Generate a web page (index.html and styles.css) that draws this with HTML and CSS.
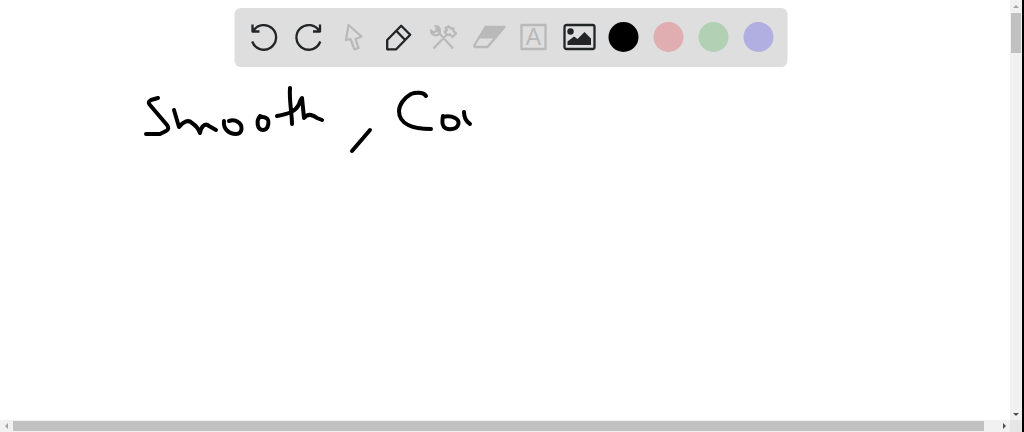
FILE: index.html
```html
<!DOCTYPE html>
<html lang="en">
<head>
    <meta charset="UTF-8">
    <meta name="viewport" content="width=device-width, initial-scale=1.0">
    <title>Whiteboard</title>
    <link rel="stylesheet" href="styles.css">
</head>
<body>
    <div class="app">
        <!-- Toolbar -->
        <div class="toolbar" role="toolbar" aria-label="Drawing tools">
            <button class="tool" type="button" aria-label="Undo">
                <svg viewBox="0 0 30 30"><path d="M4 2.500V9.500H11M4.600 9.300A12.300 12.300 0 1 1 3.700 19.500"/></svg>
            </button>
            <button class="tool" type="button" aria-label="Redo">
                <svg viewBox="0 0 30 30"><path d="M26.500 2.500V9.500H19.500M25.900 9.300A12.300 12.300 0 1 0 26.800 19.500"/></svg>
            </button>
            <button class="tool muted" type="button" aria-label="Select">
                <svg viewBox="0 0 30 30"><path d="M10 3L7.500 18L12 17L16 27.300L20 26L17 17L23 14.500Z"/></svg>
            </button>
            <button class="tool" type="button" aria-label="Pen">
                <svg viewBox="0 0 30 30"><path d="M3.700 27.300V18L17.700 3.700L26.700 12.700L12.700 27.300ZM12.700 8.700L21.700 18"/></svg>
            </button>
            <button class="tool muted" type="button" aria-label="Tools">
                <svg viewBox="0 0 30 30">
                    <path d="M6 4.500C9 3.500 12 6 11.500 9L11 11.500L24.500 26.500M11 11.500C8 15 2.500 13 2.500 8.500L5 10.500L8 9L8 6ZM5 26.500L18.500 12.500"/>
                    <path d="M17 6L20 4.500L22.500 6.500L25 6.500L25 9L27.500 11.500L24 15L21.500 12.500L19 13L16 10L18.500 8Z"/>
                </svg>
            </button>
            <button class="tool muted" type="button" aria-label="Eraser">
                <svg viewBox="0 0 30 30">
                    <path class="solid" d="M12 4H32L21 16.500H4Z"/>
                    <path d="M12 5H31L14 25H1L1 23L12 5Z"/>
                </svg>
            </button>
            <button class="tool muted" type="button" aria-label="Text">
                <svg viewBox="0 0 30 30">
                    <rect x="3" y="3" width="24" height="24"/>
                    <text class="letter" x="15" y="23" text-anchor="middle">A</text>
                </svg>
            </button>
            <button class="tool" type="button" aria-label="Image">
                <svg viewBox="0 0 30 30">
                    <rect x="1" y="3" width="30" height="24" rx="2"/>
                    <circle class="solid" cx="7" cy="9.500" r="3.200"/>
                    <path class="solid" d="M4 23V19.500L10.500 14.500L14 17L21 10L27.500 16.500V23Z"/>
                </svg>
            </button>
            <button class="swatch black" type="button" aria-label="Black"></button>
            <button class="swatch red" type="button" aria-label="Red"></button>
            <button class="swatch green" type="button" aria-label="Green"></button>
            <button class="swatch blue" type="button" aria-label="Blue"></button>
        </div>

        <!-- Drawing area -->
        <main class="board">
            <svg class="ink" role="img" aria-label="Handwriting">
                <path d="M158 98L151 100Q147 102 150 105L167 125Q170 129 166 131L160 134H146"/>
                <path d="M174 110L179 127C183 122 188 119 192 123Q198 127 200 133C201 127 205 122 209 126L216 130"/>
                <path d="M224 121C223 129 229 134 236 134C243 134 243 125 238 122C235 120 232 120 229 121"/>
                <path d="M260 116C256 121 257 130 263 130C269 130 270 119 266 118C264 116 262 118 260 116"/>
                <path d="M290 88C289 101 292 113 292 124M277 116C287 114 296 112 299 104C300 101 301 99 302 98L304 118C308 113 313 115 317 118L322 120"/>
                <path d="M370 130L352 151"/>
                <path d="M426 96C424 92 416 92 411 94C404 98 399 105 399 111C399 124 413 129 431 129"/>
                <path d="M443 116C441 126 444 130 452 129C459 128 461 121 455 118C451 116 447 116 443 117"/>
                <path d="M464 112C464 118 467 122 470 124"/>
            </svg>
        </main>

        <!-- Scrollbars -->
        <div class="scrollbar vertical">
            <button class="arrow up" type="button" aria-label="Scroll up"></button>
            <div class="track"><div class="thumb"></div></div>
            <button class="arrow down dark" type="button" aria-label="Scroll down"></button>
        </div>
        <div class="scrollbar horizontal">
            <button class="arrow left" type="button" aria-label="Scroll left"></button>
            <div class="track"><div class="thumb"></div></div>
            <button class="arrow right dark" type="button" aria-label="Scroll right"></button>
        </div>
        <div class="corner"></div>
    </div>
</body>
</html>
```
FILE: styles.css
```css
/* General styles */
* {
    box-sizing: border-box;
}

body {
    margin: 0;
    background-color: #fff;
    font-family: "Liberation Sans", Arial, sans-serif;
}

button {
    padding: 0;
    border: none;
    background: none;
    cursor: pointer;
}

.app {
    position: relative;
    display: grid;
    grid-template-columns: 1fr 12px;
    grid-template-rows: 1fr 12px;
    height: 100vh;
    border-right: 2px solid #000;
}

/* Toolbar floats over the board */
.toolbar {
    position: absolute;
    top: 8px;
    left: 50%;
    transform: translateX(-50%);
    display: flex;
    align-items: center;
    gap: 15px;
    padding: 14px 14px 15px;
    border-radius: 6px;
    background-color: #dedede;
}

.tool,
.swatch {
    width: 30px;
    height: 30px;
}

.tool {
    color: #222426;
}

.tool.muted {
    color: #b9b9b9;
}

.tool svg {
    display: block;
    width: 30px;
    height: 30px;
    overflow: visible;
    fill: none;
    stroke: currentColor;
    stroke-width: 2.3;
    stroke-linejoin: round;
}

.tool .solid {
    fill: currentColor;
    stroke: none;
}

.tool .letter {
    font-family: "Liberation Sans", Arial, sans-serif;
    font-size: 23px;
    fill: currentColor;
    stroke: none;
}

.swatch {
    border-radius: 50%;
}

.black {
    background-color: #000;
}

.red {
    background-color: #e0adb1;
}

.green {
    background-color: #b2d1b4;
}

.blue {
    background-color: #b1aee1;
}

/* Drawing area */
.board {
    min-width: 0;
    min-height: 0;
    overflow: hidden;
}

.ink {
    display: block;
    width: 100%;
    height: 100%;
    fill: none;
    stroke: #000;
    stroke-width: 4;
    stroke-linecap: round;
    stroke-linejoin: round;
}

/* Scrollbars */
.scrollbar {
    display: flex;
    background-color: #f1f1f1;
}

.vertical {
    flex-direction: column;
}

.track {
    display: flex;
    flex: 1;
}

.vertical .track {
    flex-direction: column;
    padding-top: 1px;
}

.horizontal .track {
    padding-left: 1px;
}

.thumb {
    background-color: #c1c1c1;
}

.vertical .thumb {
    height: 10%;
    margin: 0 1px;
}

.horizontal .thumb {
    width: 98.6%;
    margin: 1px 0;
}

.arrow {
    display: flex;
    align-items: center;
    justify-content: center;
    width: 12px;
    height: 12px;
    color: #a3a3a3;
}

.arrow.dark {
    color: #505050;
}

.arrow::before {
    content: "";
    border: 3px solid transparent;
}

.up::before {
    border-top: none;
    border-bottom-color: currentColor;
}

.down::before {
    border-bottom: none;
    border-top-color: currentColor;
}

.left::before {
    border-left: none;
    border-right-color: currentColor;
}

.right::before {
    border-right: none;
    border-left-color: currentColor;
}

.corner {
    background-color: #e6e6e6;
}
```
